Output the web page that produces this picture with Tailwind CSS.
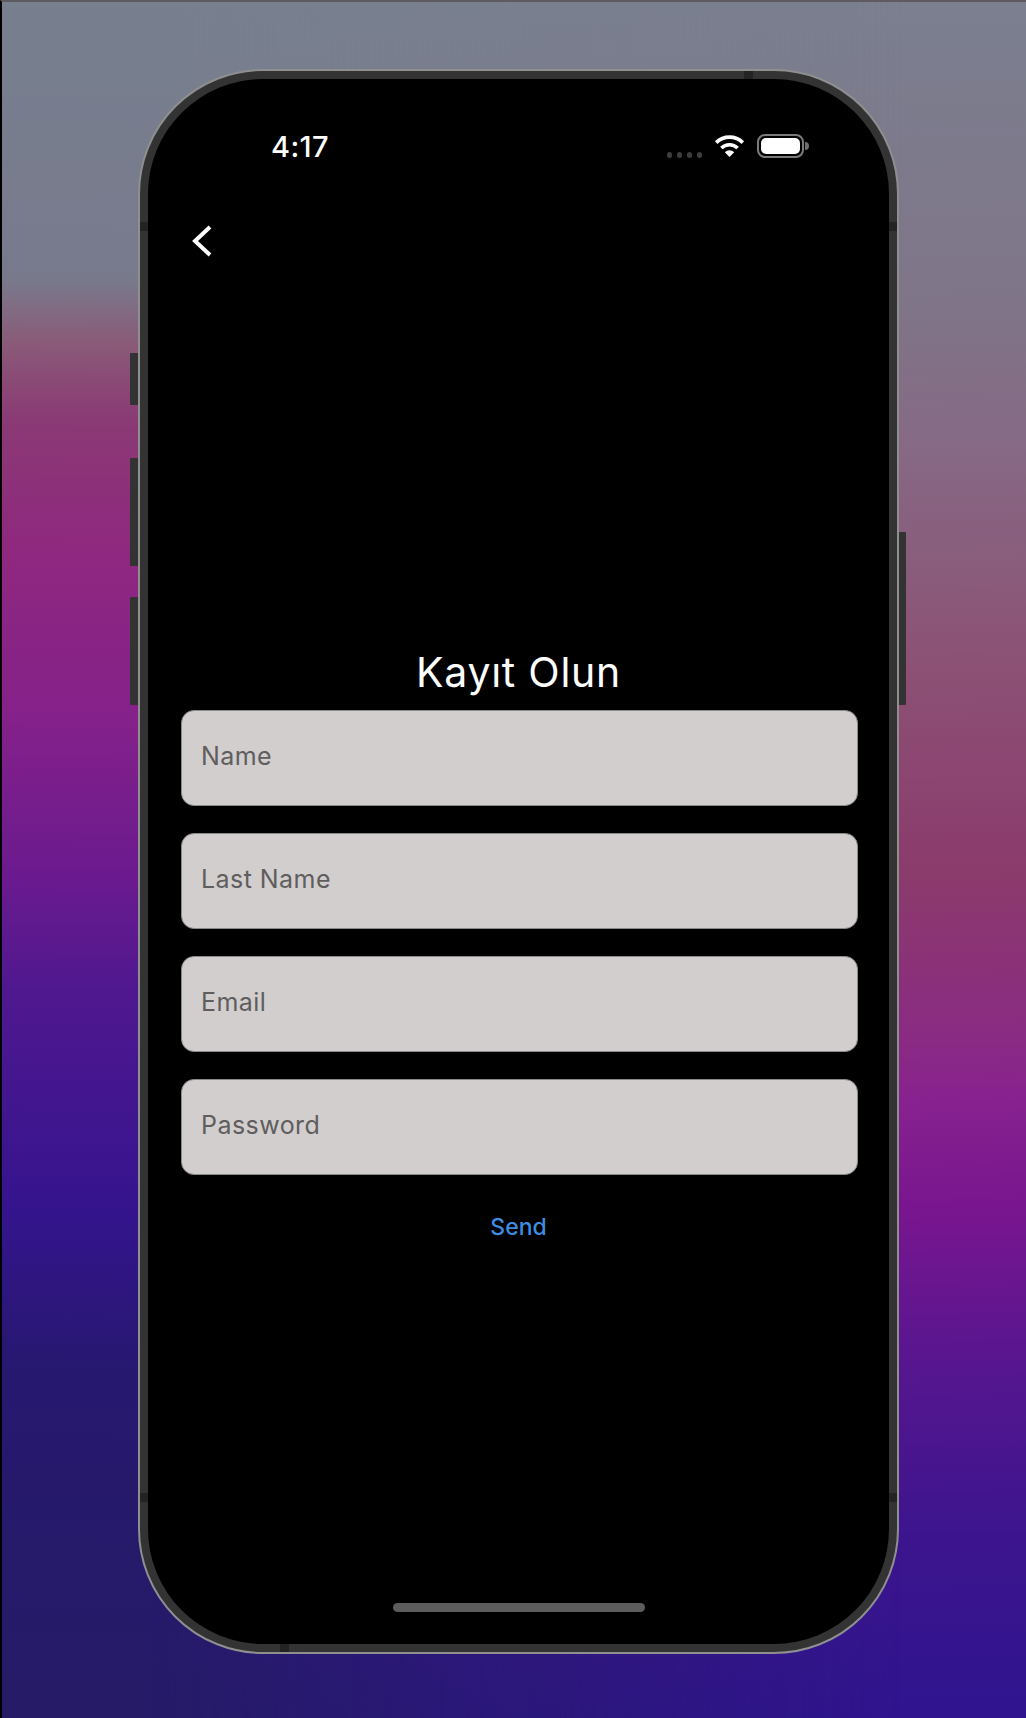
<!DOCTYPE html>
<html lang="en">
<head>
  <meta charset="UTF-8" />
  <meta name="viewport" content="width=device-width, initial-scale=1.0" />
  <title>Kayıt Olun</title>
  <script src="https://cdn.jsdelivr.net/npm/@tailwindcss/browser@4"></script>
</head>
<body class="bg-black overflow-hidden font-['Inter',sans-serif]">

  <!-- Desktop behind the simulator -->
  <div class="relative w-[1026px] h-[1718px] overflow-hidden border-t-2 border-l-2 border-t-[#5e5a60] border-l-black pt-[67px] pl-[136px] bg-[linear-gradient(179deg,#7b8090_0px,#7f7588_316px,#866a85_454px,#8c5275_673px,#8b3a6c_893px,#8a2a84_1057px,#88228f_1112px,#79168f_1221px,#55168f_1386px,#3c158e_1550px,#2f148f_1734px)]">
    <div class="absolute inset-0 bg-[linear-gradient(180.5deg,#77808f_0px,#787a8c_285px,#8a5a78_350px,#8a3a74_425px,#8f287f_555px,#85218a_720px,#6a1a8e_885px,#50188f_995px,#35148e_1212px,#26186f_1378px,#251b66_1718px)] [mask-image:linear-gradient(to_right,black_140px,transparent_900px)]"></div>

    <!-- Phone -->
    <div class="relative w-[761px] h-[1585px] rounded-[125px] border-2 border-[#8f8f8f] bg-[#333333] p-2">
      <!-- side buttons -->
      <div class="absolute left-[-10px] top-[282px] w-2 h-[52px] bg-[#333333] rounded-l-[1px]"></div>
      <div class="absolute left-[-10px] top-[387px] w-2 h-[108px] bg-[#333333] rounded-l-[1px]"></div>
      <div class="absolute left-[-10px] top-[526px] w-2 h-[108px] bg-[#333333] rounded-l-[1px]"></div>
      <div class="absolute right-[-9px] top-[461px] w-[7px] h-[173px] bg-[#333333] rounded-r-[1px]"></div>
      <!-- antenna bands -->
      <div class="absolute left-0 top-[151px] w-2 h-[9px] bg-[#232323]"></div>
      <div class="absolute right-0 top-[151px] w-2 h-[9px] bg-[#232323]"></div>
      <div class="absolute left-0 top-[1422px] w-2 h-[9px] bg-[#232323]"></div>
      <div class="absolute right-0 top-[1422px] w-2 h-[9px] bg-[#232323]"></div>
      <div class="absolute left-[604px] top-0 w-[9px] h-2 bg-[#232323]"></div>
      <div class="absolute left-[140px] bottom-0 w-[9px] h-2 bg-[#232323]"></div>

      <!-- Screen -->
      <div class="flex flex-col h-full rounded-[115px] bg-black overflow-hidden">
        <!-- Status bar -->
        <div class="flex justify-between items-center h-[136px] pl-[123px] pr-[80px] shrink-0">
          <span class="mb-[2px] text-[29px] leading-none font-medium tracking-[0.4px] text-white">4:17</span>
          <div class="flex items-center">
            <div class="flex gap-[4.5px] mt-4 mr-3">
              <span class="w-[5.5px] h-[5.5px] rounded-full bg-[#3d3d3d]"></span>
              <span class="w-[5.5px] h-[5.5px] rounded-full bg-[#3d3d3d]"></span>
              <span class="w-[5.5px] h-[5.5px] rounded-full bg-[#3d3d3d]"></span>
              <span class="w-[5.5px] h-[5.5px] rounded-full bg-[#3d3d3d]"></span>
            </div>
            <svg class="w-[31px] h-[22px] mr-3 mb-[2px]" viewBox="0 0 31 22" fill="none">
              <path d="M2.2 7.6A19 19 0 0 1 28.8 7.6" stroke="white" stroke-width="3.6" />
              <path d="M7.4 13A11.6 11.6 0 0 1 23.6 13" stroke="white" stroke-width="3.6" />
              <path d="M15.5 22L10.8 17.2A6.8 6.8 0 0 1 20.2 17.2Z" fill="white" />
            </svg>
            <div class="w-[47px] h-6 mb-[2px] rounded-[8px] border-2 border-[#7a7a7a] p-[2px]">
              <div class="h-full rounded-[5px] bg-white"></div>
            </div>
            <div class="ml-[1px] mb-[2px] w-1 h-2 rounded-r-full bg-[#6f6f6f]"></div>
          </div>
        </div>

        <!-- Back -->
        <div class="h-[52px] pl-[43px] flex items-center shrink-0">
          <svg class="w-6 h-9" viewBox="0 0 24 36" fill="none">
            <path d="M19 4L4 18L19 32" stroke="white" stroke-width="4" />
          </svg>
        </div>

        <!-- Sign up form -->
        <h1 class="mt-[381px] text-center text-[41px] leading-[48px] font-normal tracking-[0.75px] text-white">Kayıt Olun</h1>
        <form class="mt-[14px] px-[33px] flex flex-col gap-[27px]">
          <input class="w-[677px] h-[96px] rounded-[13px] border border-[#8a8a8a] bg-[#d2cece] pl-[19px] pr-5 pb-1 text-[25px] tracking-[0.45px] outline-none placeholder:text-[#5f5d5d]" placeholder="Name" />
          <input class="w-[677px] h-[96px] rounded-[13px] border border-[#8a8a8a] bg-[#d2cece] pl-[19px] pr-5 pb-1 text-[25px] tracking-[0.45px] outline-none placeholder:text-[#5f5d5d]" placeholder="Last Name" />
          <input class="w-[677px] h-[96px] rounded-[13px] border border-[#8a8a8a] bg-[#d2cece] pl-[19px] pr-5 pb-1 text-[25px] tracking-[0.45px] outline-none placeholder:text-[#5f5d5d]" placeholder="Email" />
          <input class="w-[677px] h-[96px] rounded-[13px] border border-[#8a8a8a] bg-[#d2cece] pl-[19px] pr-5 pb-1 text-[25px] tracking-[0.45px] outline-none placeholder:text-[#5f5d5d]" placeholder="Password" />
        </form>
        <button class="mt-9 text-center text-[23px] leading-8 font-medium text-[#3f8de0]">Send</button>

        <!-- Home indicator -->
        <div class="mt-auto mb-8 mx-auto w-[252px] h-[9px] rounded-full bg-[#5c5c5c] shrink-0"></div>
      </div>
    </div>
  </div>
</body>
</html>
